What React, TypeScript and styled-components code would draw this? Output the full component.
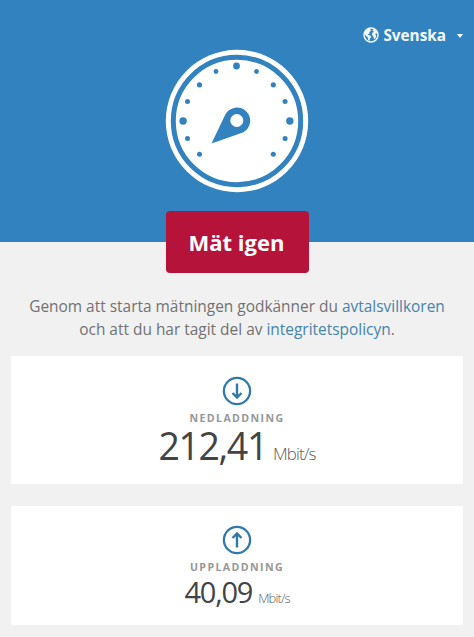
import React from "react";
import styled, { createGlobalStyle } from "styled-components";

const BLUE = "#3182bf";

const GlobalStyle = createGlobalStyle`
  * { box-sizing: border-box; }
  body { margin: 0; background: #f1f1f1; font-family: "Open Sans", "Noto Sans", sans-serif; }
`;

const Page = styled.main`
  height: 637px;
  overflow: hidden;
  display: flex;
  flex-direction: column;
  align-items: center;
  background: #f1f1f1;
`;

const Hero = styled.header`
  width: 100%;
  height: 242px;
  flex: none;
  display: flex;
  flex-direction: column;
  align-items: center;
  background: ${BLUE};
`;

const LanguageBar = styled.div`
  width: 100%;
  height: 49px;
  display: flex;
  justify-content: flex-end;
  padding: 24px 11px 0 0;
`;

const LanguageButton = styled.button`
  height: 22px;
  display: flex;
  align-items: center;
  padding: 0;
  border: 0;
  background: none;
  color: #f4faff;
  font: 700 15.3px/22px "Open Sans", sans-serif;
`;

const LanguageName = styled.span`
  margin: 0 11px 0 4px;
`;

const Caret = styled.span`
  margin-top: 2px;
  border: 3.5px solid transparent;
  border-top: 4px solid #f4faff;
  border-bottom: 0;
`;

const StartButton = styled.button`
  width: 143px;
  height: 62px;
  flex: none;
  margin-top: -31px;
  padding: 0 1px 0 0;
  border: 0;
  border-radius: 4px;
  background: #b6133a;
  color: #fff;
  font: 700 22px/62px "Open Sans", sans-serif;
`;

const Terms = styled.p`
  height: 83px;
  flex: none;
  margin: 0;
  padding-top: 22px;
  color: #727272;
  font-size: 15.45px;
  line-height: 23px;
  text-align: center;
  white-space: nowrap;
`;

const TermsLink = styled.a`
  color: #4683ad;
  text-decoration: none;
`;

const Results = styled.section`
  width: 452px;
  display: flex;
  flex-direction: column;
  gap: 22px;
`;

const Card = styled.article<{ $large?: boolean }>`
  height: ${(p) => (p.$large ? 128 : 119)}px;
  display: flex;
  flex-direction: column;
  align-items: center;
  padding-top: ${(p) => (p.$large ? 20 : 19)}px;
  background: #fff;
`;

const Label = styled.h2`
  margin: 5px 0 0;
  color: #979797;
  font-size: 10.6px;
  line-height: 15px;
  font-weight: 700;
  letter-spacing: 1.4px;
`;

const Reading = styled.div<{ $large?: boolean }>`
  display: flex;
  align-items: baseline;
  gap: 6px;
  color: #444;
  line-height: ${(p) => (p.$large ? 40 : 33)}px;
  white-space: nowrap;
`;

const Amount = styled.span<{ $large?: boolean }>`
  font-size: ${(p) => (p.$large ? 37.5 : 29)}px;
  font-weight: 400;
  letter-spacing: ${(p) => (p.$large ? -1.4 : -1.2)}px;
`;

const Unit = styled.span<{ $large?: boolean }>`
  color: #5c5c5c;
  font-size: ${(p) => (p.$large ? 17 : 13)}px;
  font-weight: 300;
  letter-spacing: -0.9px;
`;

const GlobeIcon = () => (
  <svg width="16" height="16" viewBox="0 0 16 16" aria-hidden="true">
    <circle cx="8" cy="8" r="7" fill={BLUE} stroke="#f4faff" strokeWidth="1.5" />
    <path
      fill="#f4faff"
      d="M2 3.5 5 1.5 8 1 7.3 2.6 8.2 3.8 6.3 5.1 6.6 6.6 4.8 7.2 5.2 8.1 7.2 8.5 8.4 10.1 6.8 11.8 6.4 14.2 5.2 12.7 4.6 10.1 2.9 8.7 1.5 6.2ZM9.3 3.2 11.2 1.9 13.7 4.2 14.8 7.3 13.1 6.3 12.2 7.1 13.2 8.8 12.2 11.7 10.9 11.8 10.3 9.3 9 8.1 9.3 5.8 11 5.1Z"
    />
  </svg>
);

const dots = [
  [71, 17, 3.4],
  [50.5, 22.5, 2.4], [91, 22.5, 2.4],
  [34, 35.8, 2.6], [107.8, 35.8, 2.6],
  [22, 52.5, 2.5], [119.6, 52.5, 2.5],
  [17.6, 72, 3.7], [124.3, 72, 3.7],
  [22, 89.4, 2.5], [119.6, 89.4, 2.5],
  [34, 105.3, 2.5], [107.8, 105.3, 2.5],
];

const Dial = () => (
  <svg width="144" height="144" viewBox="0 0 144 144" aria-hidden="true">
    <circle cx="72" cy="72" r="71.2" fill="#fff" />
    <circle cx="72" cy="72" r="63.7" fill="none" stroke={BLUE} strokeWidth="5" />
    <g fill={BLUE}>
      {dots.map(([x, y, r]) => (
        <circle key={`${x}-${y}`} cx={x + 0.5} cy={y} r={r} />
      ))}
      <path d="M46.5 94.5 L60.2 65.8 A13.2 13.2 0 1 1 78.5 83.2 Z" />
    </g>
    <circle cx="71.8" cy="71.5" r="6.5" fill="#fff" />
  </svg>
);

const ArrowIcon = ({ up = false }: { up?: boolean }) => (
  <svg width="30" height="30" viewBox="0 0 30 30" fill="none" stroke="#3179aa" aria-hidden="true">
    <circle cx="15" cy="15" r="13.1" strokeWidth="2.3" />
    <path
      d={up ? "M15 22.5V8.5M10.5 13 15 8.5 19.5 13" : "M15 7.5V21.5M10.5 17 15 21.5 19.5 17"}
      strokeWidth="2.4"
    />
  </svg>
);

interface ResultProps {
  label: string;
  value: string;
  up?: boolean;
  large?: boolean;
}

const Result = ({ label, value, up, large }: ResultProps) => (
  <Card $large={large}>
    <ArrowIcon up={up} />
    <Label>{label}</Label>
    <Reading $large={large}>
      <Amount $large={large}>{value}</Amount>
      <Unit $large={large}>Mbit/s</Unit>
    </Reading>
  </Card>
);

export default function App() {
  return (
    <>
      <GlobalStyle />
      <Page>
        <Hero>
          <LanguageBar>
            <LanguageButton>
              <GlobeIcon />
              <LanguageName>Svenska</LanguageName>
              <Caret />
            </LanguageButton>
          </LanguageBar>
          <Dial />
        </Hero>
        <StartButton>Mät igen</StartButton>
        <Terms>
          Genom att starta mätningen godkänner du <TermsLink>avtalsvillkoren</TermsLink>
          <br />
          och att du har tagit del av <TermsLink>integritetspolicyn</TermsLink>.
        </Terms>
        <Results>
          <Result label="NEDLADDNING" value="212,41" large />
          <Result label="UPPLADDNING" value="40,09" up />
        </Results>
      </Page>
    </>
  );
}
